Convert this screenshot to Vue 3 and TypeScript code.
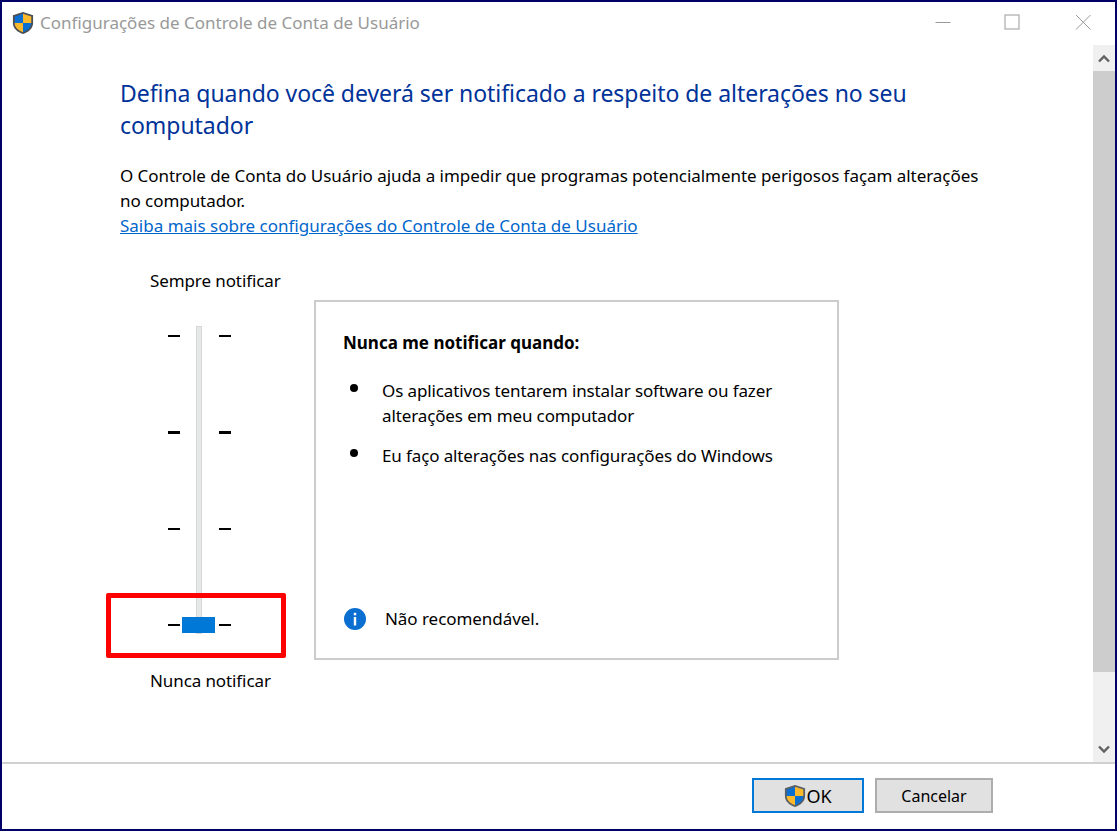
<script setup lang="ts">
const ticks: number[] = [0, 1, 2, 3]
const bullets: string[] = [
  'Os aplicativos tentarem instalar software ou fazer alterações em meu computador',
  'Eu faço alterações nas configurações do Windows',
]
</script>

<template>
  <div class="window">
    <header class="titlebar">
      <svg class="shield" viewBox="0 0 24 26" width="22" height="24">
        <path d="M12 1 L23 4.5 V13 C23 19 18 23 12 25 C6 23 1 19 1 13 V4.5 Z" fill="#4a4f55" />
        <path d="M12 3 V13 H3 V6 Z" fill="#0a6fd0" />
        <path d="M12 3 L21 6 V13 H12 Z" fill="#fdb92c" />
        <path d="M3 13 H12 V23 C7 21.5 3 18 3 13 Z" fill="#fdb92c" />
        <path d="M12 13 H21 C21 18 17 21.5 12 23 Z" fill="#0a6fd0" />
      </svg>
      <span class="title">Configurações de Controle de Conta de Usuário</span>
      <div class="controls">
        <svg class="ctl-min" width="16" height="16" viewBox="0 0 16 16"><path d="M0.5 8.5 H15.5" stroke="#999" fill="none" /></svg>
        <svg class="ctl-max" width="16" height="16" viewBox="0 0 16 16"><rect x="1" y="1" width="14" height="14" stroke="#999" fill="none" /></svg>
        <svg width="16" height="16" viewBox="0 0 16 16"><path d="M1 1 L15.5 15.5 M15.5 1 L1 15.5" stroke="#999" fill="none" /></svg>
      </div>
    </header>

    <div class="middle">
      <main class="content">
        <h1 class="heading">Defina quando você deverá ser notificado a respeito de alterações no seu computador</h1>
        <p class="intro">O Controle de Conta do Usuário ajuda a impedir que programas potencialmente perigosos façam alterações no computador.</p>
        <a class="link">Saiba mais sobre configurações do Controle de Conta de Usuário</a>

        <section class="settings">
          <div class="slider-col">
            <div class="slider-label top">Sempre notificar</div>
            <div class="slider">
              <div class="track"></div>
              <div v-for="t in ticks" :key="t" class="tick-row" :class="{ thick: t === 1 }">
                <span class="tick"></span>
                <span class="tick"></span>
              </div>
              <div class="thumb"></div>
              <div class="highlight"></div>
            </div>
            <div class="slider-label bottom">Nunca notificar</div>
          </div>

          <div class="panel">
            <div class="panel-title">Nunca me notificar quando:</div>
            <ul class="list">
              <li v-for="b in bullets" :key="b" class="item">
                <span class="dot"></span>
                <span class="item-text">{{ b }}</span>
              </li>
            </ul>
            <div class="note">
              <svg width="24" height="24" viewBox="0 0 24 24">
                <circle cx="12" cy="12" r="11" fill="#0a6fd0" />
                <rect x="10.8" y="10" width="2.4" height="8.5" fill="#fff" />
                <rect x="10.8" y="5.8" width="2.4" height="2.5" fill="#fff" />
              </svg>
              <span>Não recomendável.</span>
            </div>
          </div>
        </section>
      </main>

      <aside class="scrollbar">
        <div class="arrow">
          <svg width="12" height="9" viewBox="0 0 12 9"><path d="M1 7.5 L6 2.5 L11 7.5" stroke="#606060" stroke-width="2.4" fill="none" /></svg>
        </div>
        <div class="bar"></div>
        <div class="gutter"></div>
        <div class="arrow">
          <svg width="12" height="9" viewBox="0 0 12 9"><path d="M1 1.5 L6 6.5 L11 1.5" stroke="#606060" stroke-width="2.4" fill="none" /></svg>
        </div>
      </aside>
    </div>

    <footer class="footer">
      <button class="btn primary">
        <svg viewBox="0 0 24 26" width="22" height="24">
          <path d="M12 1 L23 4.5 V13 C23 19 18 23 12 25 C6 23 1 19 1 13 V4.5 Z" fill="#5a5f65" />
          <path d="M12 3 V13 H3 V6 Z" fill="#0a6fd0" />
          <path d="M12 3 L21 6 V13 H12 Z" fill="#fdb92c" />
          <path d="M3 13 H12 V23 C7 21.5 3 18 3 13 Z" fill="#fdb92c" />
          <path d="M12 13 H21 C21 18 17 21.5 12 23 Z" fill="#0a6fd0" />
        </svg>
        <span>OK</span>
      </button>
      <button class="btn">Cancelar</button>
    </footer>
  </div>
</template>

<style scoped>
.window {
  width: 1117px;
  height: 831px;
  box-sizing: border-box;
  border: 2px solid #000066;
  background: #fff;
  display: flex;
  flex-direction: column;
  font-family: "Noto Sans", "Open Sans", sans-serif;
  font-size: 17px;
  letter-spacing: -0.05px;
  color: #000;
  overflow: hidden;
}
.titlebar {
  height: 43px;
  flex: none;
  display: flex;
  align-items: center;
  padding-left: 10px;
  box-sizing: border-box;
}
.shield { margin-right: 6px; margin-top: -2px; }
.title { color: #999; font-size: 17px; letter-spacing: 0; margin-top: -2px; }
.controls {
  margin-left: auto;
  display: flex;
  padding-right: 24px;
  margin-top: -4px;
}
.ctl-min { margin-right: 53px; }
.ctl-max { margin-right: 55px; }
.middle { flex: 1; display: flex; min-height: 0; }
.content { flex: 1; padding: 32px 0 0 118px; box-sizing: border-box; min-width: 0; }
.heading {
  margin: 0;
  width: 860px;
  font-weight: 400;
  font-size: 23px;
  line-height: 32px;
  letter-spacing: -0.05px;
  color: #003399;
}
.intro { margin: 22px 0 0; width: 880px; line-height: 25px; }
.link { display: block; line-height: 25px; color: #0066cc; text-decoration: underline; letter-spacing: 0; }
.settings { display: flex; margin-top: 30px; }
.slider-col { width: 194px; flex: none; position: relative; }
.slider-label { padding-left: 30px; line-height: 25px; letter-spacing: -0.1px; }
.slider {
  position: relative;
  height: 300px;
  margin-top: 33px;
  display: flex;
  flex-direction: column;
  justify-content: space-between;
  padding-top: 9px;
  box-sizing: border-box;
}
.tick-row { display: flex; gap: 39px; padding-left: 48px; height: 2px; }
.tick { width: 12px; height: 2px; background: #000; }
.thick .tick { height: 3px; }
.track {
  position: absolute;
  left: 76px;
  top: 0;
  bottom: -8px;
  width: 6px;
  background: #e6e7e7;
  border: 1px solid #d6d6d6;
  box-sizing: border-box;
}
.thumb {
  position: absolute;
  left: 62px;
  bottom: -7px;
  width: 33px;
  height: 16px;
  background: #0078d7;
}
.highlight {
  position: absolute;
  left: -14px;
  bottom: -32px;
  width: 180px;
  height: 65px;
  border: 5px solid #ff0000;
  border-radius: 2px;
  box-sizing: border-box;
}
.slider-label.bottom { margin-top: 42px; }
.panel {
  width: 525px;
  height: 360px;
  margin-top: 32px;
  flex: none;
  border: 2px solid #cccccc;
  box-sizing: border-box;
  padding: 28px 27px 0;
  display: flex;
  flex-direction: column;
}
.panel-title { font-weight: 700; line-height: 25px; letter-spacing: 0; }
.list { list-style: none; margin: 23px 0 0; padding: 0; }
.item { display: flex; margin-bottom: 15px; }
.dot {
  flex: none;
  width: 8px;
  height: 8px;
  margin: 6px 24px 0 7px;
  border-radius: 50%;
  background: #000;
}
.item-text { line-height: 25px; width: 410px; letter-spacing: -0.12px; }
.note {
  margin-top: auto;
  margin-bottom: 27px;
  display: flex;
  align-items: center;
  gap: 18px;
  line-height: 25px;
}
.note svg { margin-top: 2px; }
.scrollbar {
  width: 22px;
  flex: none;
  display: flex;
  flex-direction: column;
  background: #f0f0f0;
}
.arrow { height: 26px; display: flex; align-items: center; justify-content: center; }
.bar { height: 601px; background: #cdcdcd; }
.gutter { flex: 1; }
.footer {
  height: 67px;
  flex: none;
  border-top: 2px solid #d0d0d0;
  box-sizing: border-box;
  display: flex;
  justify-content: flex-end;
  gap: 11px;
  padding: 14px 122px 0 0;
}
.btn {
  width: 118px;
  height: 35px;
  margin: 0;
  padding: 0;
  border: 2px solid #adadad;
  background: #e1e1e1;
  font: inherit;
  font-size: 16px;
  letter-spacing: 0;
  color: #000;
  display: flex;
  align-items: center;
  justify-content: center;
}
.primary { width: 112px; border-color: #0078d7; font-size: 18px; }
</style>
